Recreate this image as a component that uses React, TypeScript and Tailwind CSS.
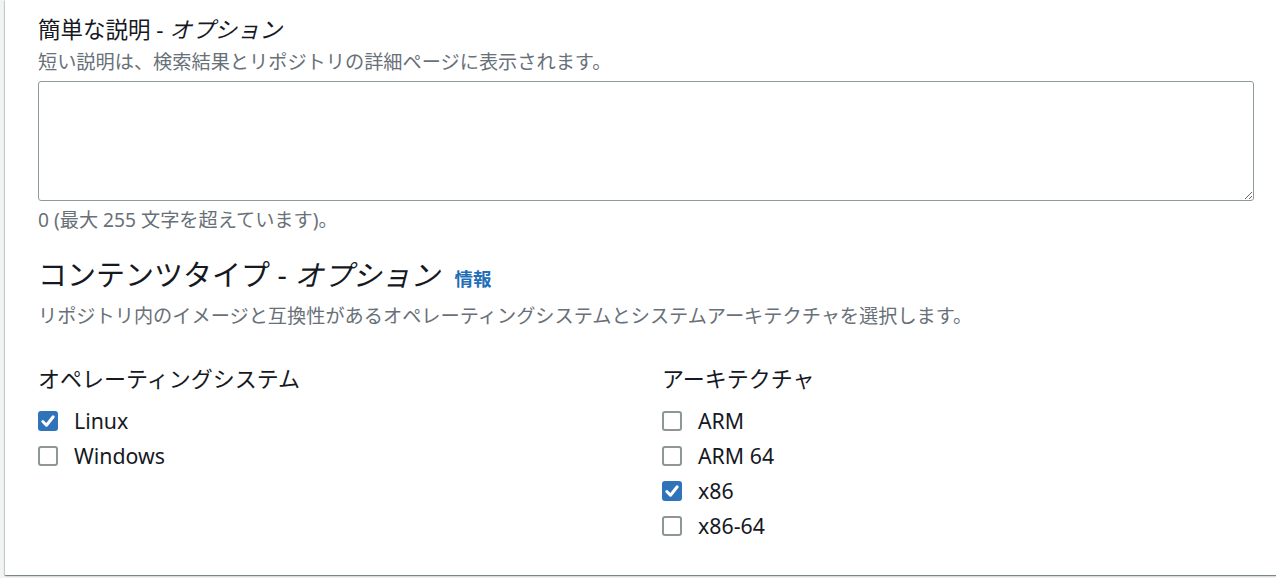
import React from 'react';

type Option = { label: string; checked: boolean };

const OS_OPTIONS: Option[] = [
  { label: 'Linux', checked: true },
  { label: 'Windows', checked: false },
];

const ARCH_OPTIONS: Option[] = [
  { label: 'ARM', checked: false },
  { label: 'ARM 64', checked: false },
  { label: 'x86', checked: true },
  { label: 'x86-64', checked: false },
];

function Checkbox({ label, checked }: Option) {
  return (
    <label className="flex items-center h-[35px] gap-4 cursor-pointer">
      {checked ? (
        <span className="w-5 h-5 rounded-[3px] bg-[#2f73bb] flex items-center justify-center">
          <svg viewBox="0 0 20 20" className="w-5 h-5">
            <polyline
              points="4.8,10.5 8.5,14.2 15.2,5.8"
              fill="none"
              stroke="white"
              strokeWidth="3"
              strokeLinecap="round"
              strokeLinejoin="round"
            />
          </svg>
        </span>
      ) : (
        <span className="w-5 h-5 rounded-[3px] border-2 border-[#8d9797] bg-white" />
      )}
      <span className="text-[21.3px] text-[#16191f]">{label}</span>
    </label>
  );
}

function CheckGroup({ title, options }: { title: string; options: Option[] }) {
  return (
    <div>
      <div className="text-[22px] leading-[30px] text-[#16191f]">{title}</div>
      <div className="mt-[10px]">
        {options.map((o) => (
          <Checkbox key={o.label} {...o} />
        ))}
      </div>
    </div>
  );
}

export default function App() {
  return (
    <div className="h-[578px] bg-[#f2f3f3] pl-[5px] flex overflow-hidden font-['Noto_Sans','Noto_Sans_CJK_JP',sans-serif]">
      <div className="w-[1282px] h-[575px] shrink-0 bg-white pl-[33px] pr-8 pt-[15px] shadow-[0_1px_1px_0_rgba(0,28,36,0.3),1px_1px_1px_0_rgba(0,28,36,0.15),-1px_1px_1px_0_rgba(0,28,36,0.15)]">
        <div className="text-[22.5px] leading-[30px] text-[#16191f]">
          簡単な説明 - <i>オプション</i>
        </div>
        <p className="mt-1 text-[19.2px] leading-[26px] text-[#687078]">
          短い説明は、検索結果とリポジトリの詳細ページに表示されます。
        </p>
        <textarea
          className="mt-[6px] block w-[1216px] h-[120px] rounded-[3px] border border-[#8f9b9b] resize-y outline-none"
          defaultValue=""
        />
        <p className="mt-[6px] text-[19.2px] leading-[26px] text-[#687078]">
          0 (最大 255 文字を超えています)。
        </p>

        <div className="mt-[23px] flex items-baseline gap-[15px]">
          <h2 className="text-[29px] leading-[38px] text-[#16191f]">
            コンテンツタイプ - <i>オプション</i>
          </h2>
          <a className="text-[18.5px] font-bold text-[#1f6fb8]">情報</a>
        </div>
        <p className="mt-[9px] text-[19.2px] leading-[26px] text-[#687078]">
          リポジトリ内のイメージと互換性があるオペレーティングシステムとシステムアーキテクチャを選択します。
        </p>

        <div className="mt-[34px] grid grid-cols-2 gap-8 w-[1216px]">
          <CheckGroup title="オペレーティングシステム" options={OS_OPTIONS} />
          <CheckGroup title="アーキテクチャ" options={ARCH_OPTIONS} />
        </div>
      </div>
    </div>
  );
}
